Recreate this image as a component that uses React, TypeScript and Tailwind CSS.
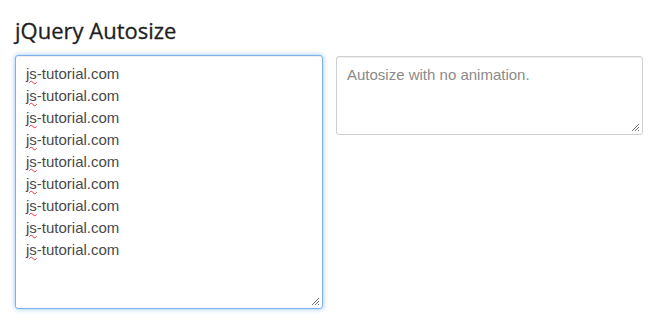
import React from "react";

const LINES = Array.from({ length: 9 }, () => "js-tutorial.com");

function Grip() {
  return (
    <svg
      className="absolute bottom-[2px] right-[2px]"
      width="9"
      height="9"
      viewBox="0 0 9 9"
    >
      <path d="M8 1 L1 8 M8 4 L4 8 M8 7 L7 8" stroke="#777" strokeWidth="1" />
    </svg>
  );
}

export default function App() {
  return (
    <div className="w-[660px] h-[330px] bg-white px-[15px] pt-[17px]">
      {/* Heading */}
      <h1 className="h-[26px] text-[22px] leading-[26px] font-normal text-[#1e1e1e] font-['Open_Sans',sans-serif] [-webkit-text-stroke:0.3px_#1e1e1e]">
        jQuery Autosize
      </h1>

      <div className="mt-[12px] flex items-start gap-[13px] font-['Liberation_Sans',Arial,sans-serif] text-[15px] leading-[22px]">
        {/* Focused textarea with content */}
        <div className="relative w-[308px] h-[254px] rounded-[3px] border border-[#7fb0ec] bg-white pt-[7px] pl-[10px] text-[#4a4a4a] shadow-[inset_0_1px_1px_rgba(0,0,0,0.075),0_0_5px_rgba(102,175,233,0.7)]">
          {LINES.map((line, i) => (
            <div key={i}>
              <span className="underline decoration-wavy decoration-[#e33] decoration-1 underline-offset-[1px]">
                {line.slice(0, 2)}
              </span>
              {line.slice(2)}
            </div>
          ))}
          <Grip />
        </div>

        {/* Empty textarea with placeholder */}
        <div className="relative mt-[1px] w-[307px] h-[79px] rounded-[3px] border border-[#d0d0d0] bg-white pt-[7px] pl-[10px] text-[#8a8a8a] shadow-[inset_0_1px_1px_rgba(0,0,0,0.075)]">
          Autosize with no animation.
          <Grip />
        </div>
      </div>
    </div>
  );
}
